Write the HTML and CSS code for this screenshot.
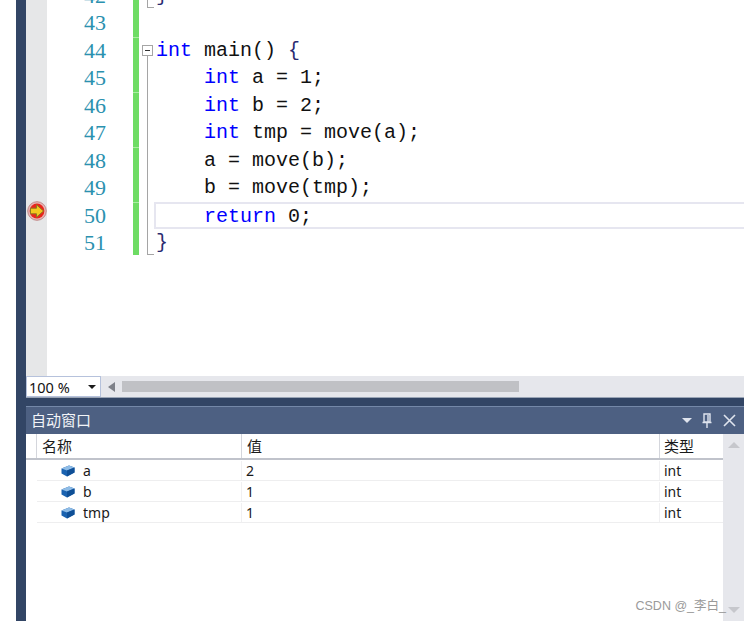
FILE: index.html
```html
<!DOCTYPE html>
<html lang="zh">

<head>
    <meta charset="UTF-8">
    <title>自动窗口</title>
    <link rel="stylesheet" href="styles.css">
</head>

<body>
    <div class="shell">
        <!-- 编辑器 -->
        <div class="editor">
            <div class="gutter">
                <svg class="bp" width="20" height="20" viewBox="0 0 20 20">
                    <circle cx="10" cy="10" r="9.3" fill="#e8b4b4" stroke="#c08a8a" stroke-width="1"/>
                    <circle cx="10" cy="10" r="7.4" fill="#e8251c"/>
                    <path d="M3.5 7.2H9.5V3.8L16.5 10L9.5 16.2V12.8H3.5Z" fill="#f2c81e" stroke="#8d7a20" stroke-width="1"/>
                </svg>
            </div>
            <div class="lines">
                <div class="row">
                    <span class="num">42</span><span class="chg"></span>
                    <span class="fold fold-end"></span>
                    <span class="code"><span class="brace">}</span></span>
                </div>
                <div class="row">
                    <span class="num">43</span><span class="chg"></span>
                    <span class="fold"></span>
                    <span class="code"></span>
                </div>
                <div class="row">
                    <span class="num">44</span><span class="chg chg-top"></span>
                    <span class="fold fold-open"><i class="fold-box"></i></span>
                    <span class="code"><b>int</b> main() <span class="brace">{</span></span>
                </div>
                <div class="row">
                    <span class="num">45</span><span class="chg"></span>
                    <span class="fold fold-line"></span>
                    <span class="code">    <b>int</b> a = 1;</span>
                </div>
                <div class="row">
                    <span class="num">46</span><span class="chg chg-top"></span>
                    <span class="fold fold-line"></span>
                    <span class="code">    <b>int</b> b = 2;</span>
                </div>
                <div class="row">
                    <span class="num">47</span><span class="chg"></span>
                    <span class="fold fold-line"></span>
                    <span class="code">    <b>int</b> tmp = move(a);</span>
                </div>
                <div class="row">
                    <span class="num">48</span><span class="chg chg-top"></span>
                    <span class="fold fold-line"></span>
                    <span class="code">    a = move(b);</span>
                </div>
                <div class="row">
                    <span class="num">49</span><span class="chg"></span>
                    <span class="fold fold-line"></span>
                    <span class="code">    b = move(tmp);</span>
                </div>
                <div class="row">
                    <span class="num">50</span><span class="chg chg-top"></span>
                    <span class="fold fold-line"></span>
                    <span class="code current">    <b>return</b> 0;</span>
                </div>
                <div class="row">
                    <span class="num">51</span><span class="chg chg-last"></span>
                    <span class="fold fold-end"></span>
                    <span class="code"><span class="brace">}</span></span>
                </div>
            </div>
        </div>

        <!-- 缩放+横向滚动条 -->
        <div class="hbar">
            <div class="zoom">
                <span>100 %</span>
                <i class="caret"></i>
            </div>
            <i class="arrow-left"></i>
            <div class="thumb"></div>
        </div>

        <!-- 自动窗口 -->
        <div class="panel">
            <div class="panel-head">
                <span class="panel-title">自动窗口</span>
                <i class="caret caret-w"></i>
                <svg class="pin" width="12" height="15" viewBox="0 0 12 15">
                    <path d="M3 1H9V9H3ZM7 2V9M1.500 9.500H10.500M6 10V15" fill="none" stroke="#dfe4ee" stroke-width="1.400"/>
                </svg>
                <svg class="close" width="13" height="13" viewBox="0 0 13 13">
                    <path d="M1 1L12 12M12 1L1 12" stroke="#dfe4ee" stroke-width="1.600"/>
                </svg>
            </div>
            <div class="panel-body">
                <div class="table">
                    <div class="thead">
                        <span class="th-blank"></span>
                        <span class="c-name">名称</span>
                        <span class="c-val">值</span>
                        <span class="c-type">类型</span>
                    </div>
                    <div class="tr">
                        <span class="c-name">
                            <svg class="cube" width="14" height="12" viewBox="0 0 14 12"><use href="#cube"/></svg>a
                        </span>
                        <span class="c-val">2</span>
                        <span class="c-type">int</span>
                    </div>
                    <div class="tr">
                        <span class="c-name">
                            <svg class="cube" width="14" height="12" viewBox="0 0 14 12"><use href="#cube"/></svg>b
                        </span>
                        <span class="c-val">1</span>
                        <span class="c-type">int</span>
                    </div>
                    <div class="tr">
                        <span class="c-name">
                            <svg class="cube" width="14" height="12" viewBox="0 0 14 12"><use href="#cube"/></svg>tmp
                        </span>
                        <span class="c-val">1</span>
                        <span class="c-type">int</span>
                    </div>
                </div>
                <div class="vbar">
                    <i class="arrow-up"></i>
                    <i class="arrow-down"></i>
                </div>
            </div>
        </div>
    </div>

    <!-- 水印 -->
    <div class="mark">CSDN @_李白_</div>

    <svg width="0" height="0" class="defs">
        <symbol id="cube" viewBox="0 0 14 12">
            <path d="M0.500 3.500L8 0.500L13.500 2.500V7.500L6 11.500L0.500 8.500Z" fill="#1a62b0"/>
            <path d="M0.500 3.500L8 0.500L13.500 2.500L6 5.500Z" fill="#8fbce6"/>
            <path d="M6 5.500V11.500L13.500 7.500V2.500Z" fill="#0f4f96"/>
        </symbol>
    </svg>
</body>

</html>
```

FILE: styles.css
```css
html,
body {
    margin: 0;
    padding: 0;
}

body {
    position: relative;
    width: 744px;
    height: 621px;
    overflow: hidden;
    background-color: #fff;
    font-family: "Noto Sans", "Noto Sans CJK SC", sans-serif;
}

.defs {
    position: absolute;
}

/* 왼쪽 흰 여백 + 짙은 테두리 */
.shell {
    display: flex;
    flex-direction: column;
    height: 621px;
    margin-left: 16px;
    border-left: 10px solid #324565;
    background-color: #324565;
}

/* 编辑器 */
.editor {
    display: flex;
    height: 376px;
    overflow: hidden;
    background-color: #fff;
}

.gutter {
    position: relative;
    flex: none;
    width: 21px;
    background-color: #e6e7e8;
}

.bp {
    position: absolute;
    top: 201px;
    left: 1px;
}

.lines {
    flex: 1;
    margin-top: -18.5px;
}

.row {
    display: flex;
    height: 27.5px;
    font: 20px/27.5px "Liberation Mono", monospace;
}

.num {
    flex: none;
    width: 59px;
    text-align: right;
    font: 22px/27.5px "Liberation Serif", serif;
    color: #2b91af;
}

.chg {
    flex: none;
    width: 6px;
    margin-left: 27px;
    background-color: #6edc64;
}

.chg-top {
    border-top: 1px solid #a9eca2;
    box-sizing: border-box;
}

.chg-last {
    height: 26px;
}

/* 折叠线 */
.fold {
    position: relative;
    flex: none;
    width: 16px;
}

.fold-line::before,
.fold-open::before {
    content: '';
    position: absolute;
    top: 0;
    bottom: 0;
    left: 8px;
    border-left: 1px solid #a5a5a5;
}

.fold-open::before {
    top: 18px;
}

.fold-end::before {
    content: '';
    position: absolute;
    top: 0;
    left: 8px;
    width: 6px;
    height: 25px;
    border-left: 1px solid #a5a5a5;
    border-bottom: 1px solid #a5a5a5;
}

.fold-box {
    position: absolute;
    top: 8px;
    left: 3px;
    width: 9px;
    height: 9px;
    border: 1px solid #a5a5a5;
    background-color: #fff;
}

.fold-box::after {
    content: '';
    position: absolute;
    top: 4px;
    left: 2px;
    width: 5px;
    height: 1px;
    background-color: #333;
}

.code {
    flex: 1;
    margin-left: -1px;
    padding-left: 2px;
    white-space: pre;
    color: #111;
}

.code b {
    font-weight: normal;
    color: #0000ff;
}

.brace {
    color: #2a2a70;
}

/* 현재 줄 */
.current {
    box-sizing: border-box;
    height: 27px;
    padding-left: 0;
    line-height: 25px;
    border: 2px solid #e6e6f0;
    border-right: 0;
}

/* 가로 스크롤바 */
.hbar {
    display: flex;
    align-items: center;
    flex: none;
    box-sizing: border-box;
    height: 22px;
    border-bottom: 1px solid #9aa5b6;
    background-color: #e6e7ec;
}

.zoom {
    display: flex;
    align-items: center;
    justify-content: space-between;
    box-sizing: border-box;
    width: 75px;
    height: 21px;
    padding: 0 4px 0 2px;
    border: 1px solid #b6c2dc;
    background-color: #fff;
    font: 14.5px "Noto Sans", sans-serif;
    color: #111;
}

.caret {
    width: 0;
    height: 0;
    border-left: 4px solid transparent;
    border-right: 4px solid transparent;
    border-top: 4px solid #1b1b1b;
}

.arrow-left {
    width: 0;
    height: 0;
    margin-left: 7px;
    border-top: 5px solid transparent;
    border-bottom: 5px solid transparent;
    border-right: 7px solid #7f828a;
}

.thumb {
    width: 397px;
    height: 11px;
    margin-left: 7px;
    background-color: #c0c1c5;
}

/* 自动窗口 */
.panel {
    display: flex;
    flex-direction: column;
    flex: 1;
    min-height: 0;
    margin-top: 8px;
}

.panel-head {
    display: flex;
    align-items: center;
    flex: none;
    box-sizing: border-box;
    height: 28px;
    padding-left: 5px;
    border-top: 1px solid #7488a8;
    background-color: #4d6082;
}

.panel-title {
    flex: 1;
    padding-bottom: 2px;
    font-size: 15px;
    color: #f2f4f8;
}

.caret-w {
    border-top: 5px solid #dfe4ee;
    border-left-width: 5px;
    border-right-width: 5px;
}

.pin {
    margin-left: 9px;
}

.close {
    margin: 0 8px 0 10px;
}

.panel-body {
    display: flex;
    flex: 1;
    min-height: 0;
    background-color: #fff;
}

.table {
    flex: 1;
    font-size: 14px;
    color: #1a1a1a;
}

.thead {
    display: flex;
    box-sizing: border-box;
    height: 26px;
    border-bottom: 2px solid #c0c3cb;
    font-size: 15px;
    line-height: 24px;
}

.th-blank {
    box-sizing: border-box;
    width: 11px;
    border-right: 1px solid #d4d6dc;
}

.thead span {
    border-right: 1px solid #d4d6dc;
}

.thead span:last-child,
.tr span:last-child {
    border-right: 0;
}

.c-name {
    box-sizing: border-box;
    width: 205px;
    padding-left: 5px;
}

.c-val {
    box-sizing: border-box;
    width: 418px;
    padding-left: 5px;
}

.c-type {
    box-sizing: border-box;
    flex: 1;
    padding-left: 4px;
}

.tr {
    display: flex;
    box-sizing: border-box;
    height: 21px;
    margin-left: 11px;
    padding-top: 1px;
    border-bottom: 1px solid #eeeeef;
    line-height: 20px;
}

.tr .c-name {
    display: flex;
    align-items: center;
    width: 205px;
    padding-left: 24px;
    border-right: 1px solid #f0f0f2;
}

.tr .c-val {
    padding-left: 4px;
    border-right: 1px solid #f0f0f2;
}

.cube {
    margin-right: 8px;
}

.vbar {
    display: flex;
    flex-direction: column;
    align-items: center;
    justify-content: space-between;
    flex: none;
    box-sizing: border-box;
    width: 21px;
    padding: 8px 0 8px;
    background-color: #e6e7ec;
}

.arrow-up,
.arrow-down {
    width: 0;
    height: 0;
    border-left: 6px solid transparent;
    border-right: 6px solid transparent;
}

.arrow-up {
    border-bottom: 6px solid #c6c7cc;
}

.arrow-down {
    border-top: 6px solid #c6c7cc;
}

/* 水印 */
.mark {
    position: absolute;
    right: 18px;
    bottom: 7px;
    font: 12.5px "Liberation Sans", "Noto Sans CJK SC", sans-serif;
    color: #9a9a9a;
}
```
